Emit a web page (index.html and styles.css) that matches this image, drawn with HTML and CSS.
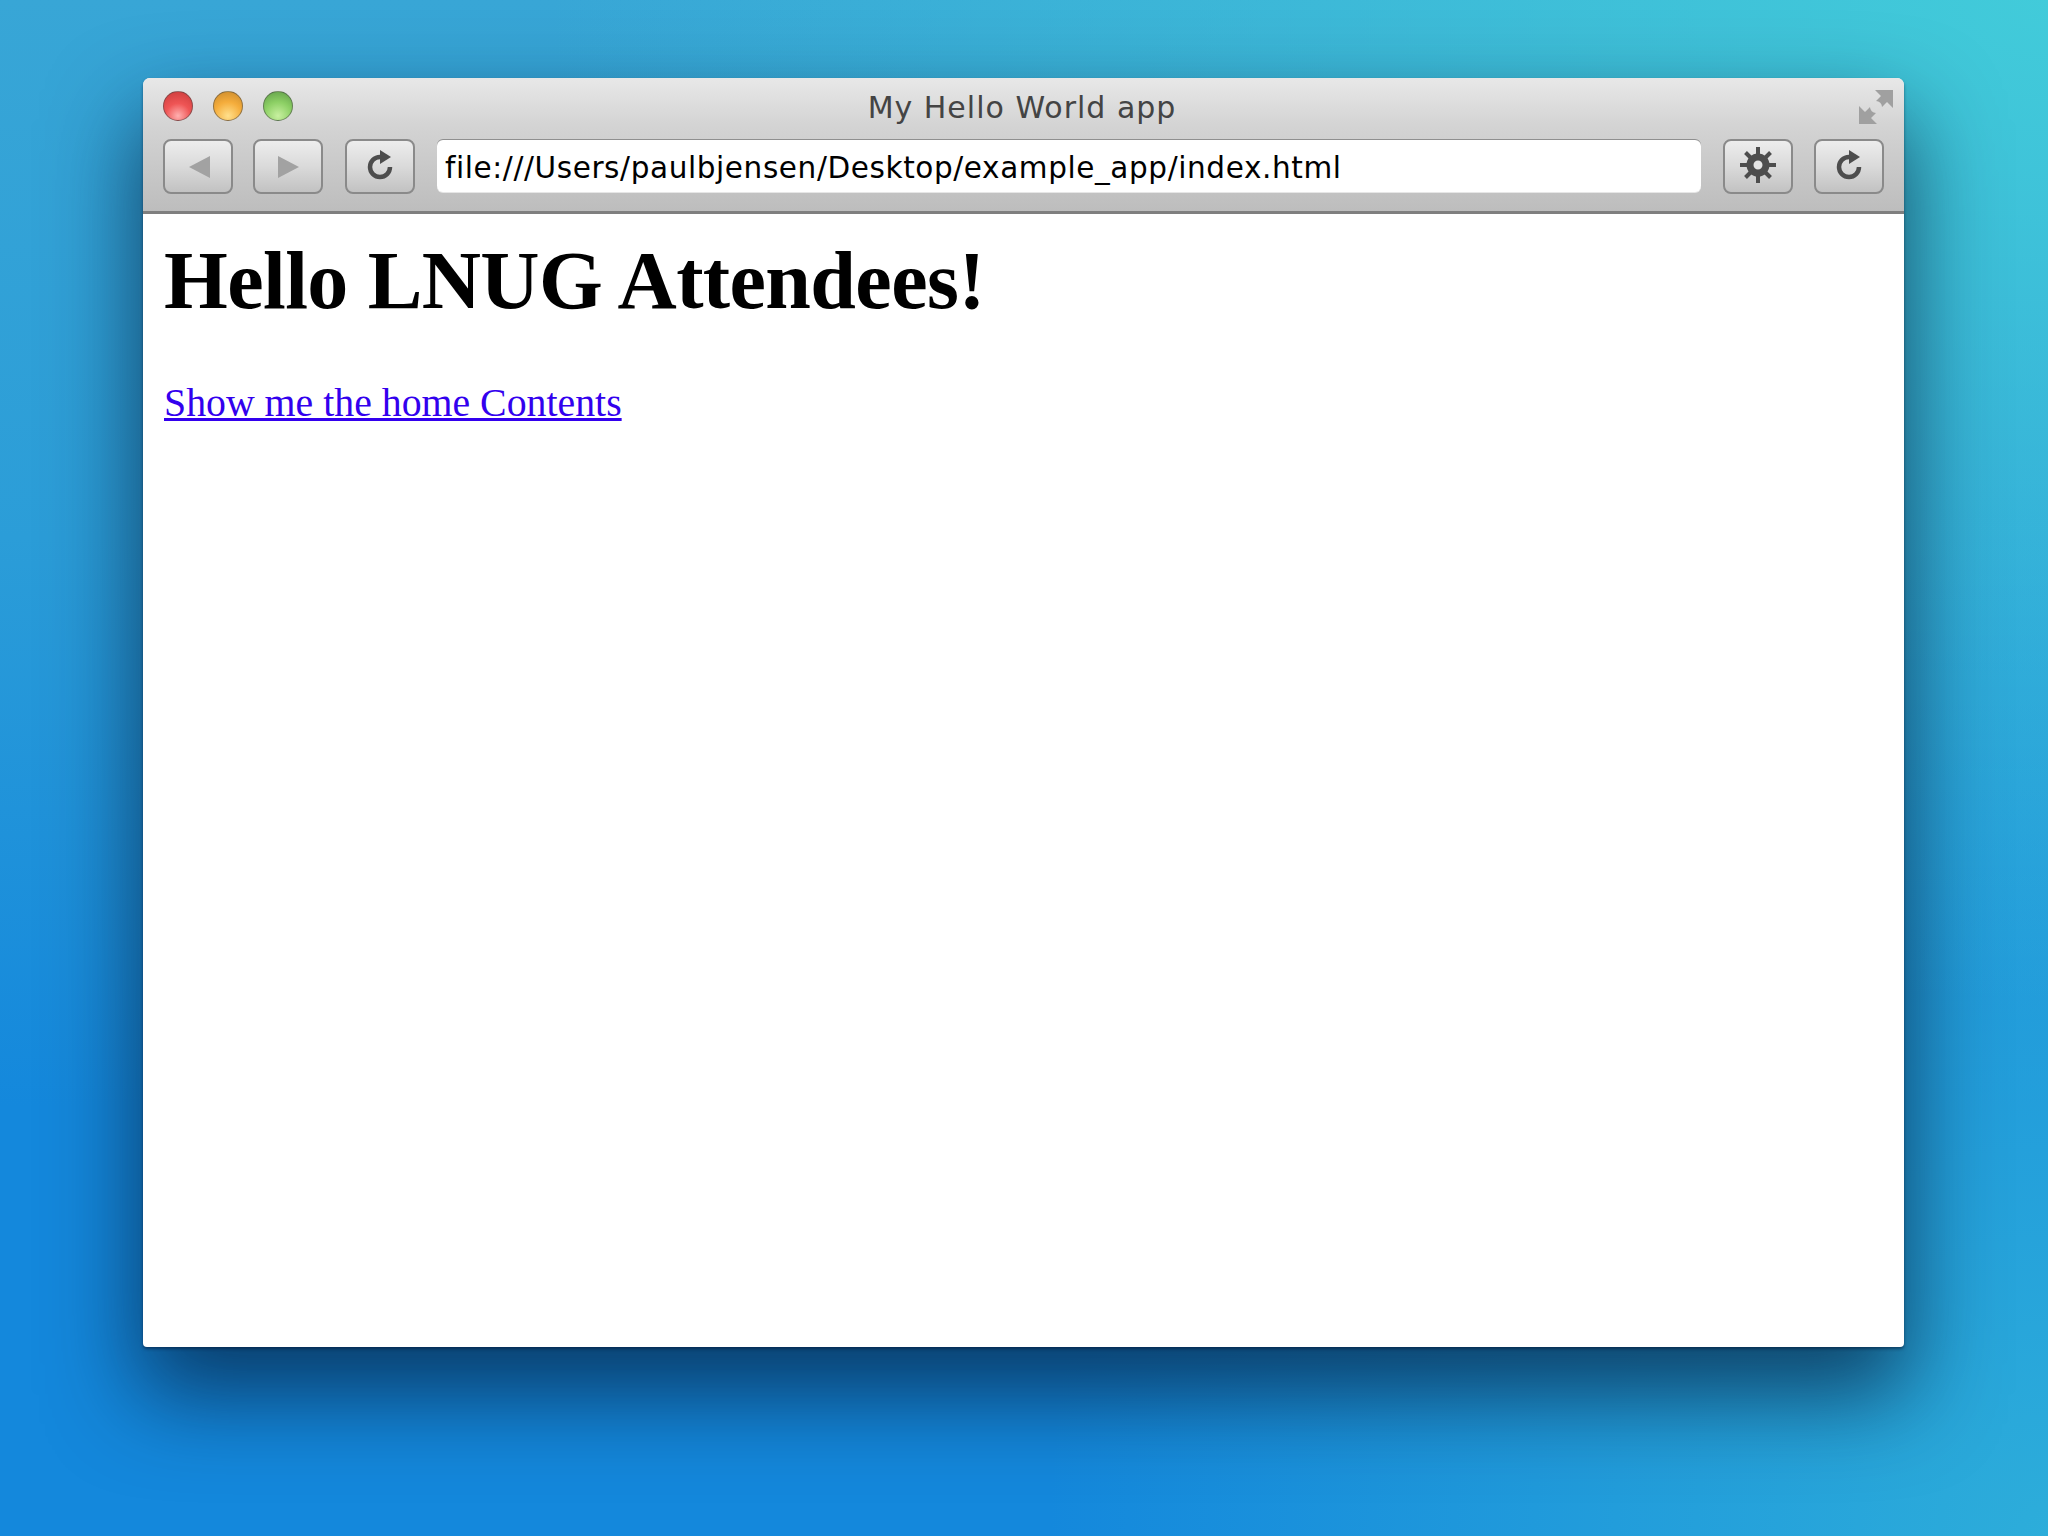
FILE: index.html
```html
<!DOCTYPE html>
<html lang="en">
<head>
<meta charset="utf-8">
<title>My Hello World app</title>
<link rel="stylesheet" href="styles.css">
</head>
<body>
<div class="window">
  <header class="chrome">
    <div class="titlebar">
      <div class="lights">
        <span class="light light-red"></span>
        <span class="light light-yellow"></span>
        <span class="light light-green"></span>
      </div>
      <div class="title">My Hello World app</div>
      <div class="fullscreen">
        <svg class="fs-icon" viewBox="0 0 36 36" width="36" height="36">
          <path class="fs-path" d="M17 1H35V19L29 13L24 18A6 6 0 0 0 18 12L23 7Z"/>
          <path class="fs-path" d="M1 17V35H19L13 29L18 24A6 6 0 0 1 12 18L7 23Z"/>
        </svg>
      </div>
    </div>
    <div class="toolbar">
      <div class="btn">
        <svg class="ic-back" viewBox="0 0 24 24" width="24" height="24"><path class="ic-faint" d="M1 12L22 1V23Z"/></svg>
      </div>
      <div class="btn">
        <svg viewBox="0 0 24 24" width="24" height="24"><path class="ic-faint" d="M23 12L2 1V23Z"/></svg>
      </div>
      <div class="btn btn-reload">
        <svg class="ic-raised" viewBox="0 0 30 30" width="30" height="30"><path class="ic-stroke" d="M25 17A10 10 0 1 1 15 7H17"/><path class="ic-fill" d="M15 0L26 7L15 14Z"/></svg>
      </div>
      <div class="url">file:///Users/paulbjensen/Desktop/example_app/index.html</div>
      <div class="btn btn-gear">
        <svg class="ic-raised" viewBox="0 0 40 40" width="40" height="40">
          <path class="ic-teeth" d="M20 2V38M2 20H38M7.5 7.5L32.5 32.5M32.5 7.5L7.5 32.5"/>
          <circle class="ic-ring" cx="20" cy="20" r="8"/>
        </svg>
      </div>
      <div class="btn">
        <svg class="ic-raised" viewBox="0 0 30 30" width="30" height="30"><path class="ic-stroke" d="M25 17A10 10 0 1 1 15 7H17"/><path class="ic-fill" d="M15 0L26 7L15 14Z"/></svg>
      </div>
    </div>
  </header>
  <main class="content">
    <h1 class="heading">Hello LNUG Attendees!</h1>
    <p class="para"><a class="link" href="#">Show me the home Contents</a></p>
  </main>
</div>
</body>
</html>
```
FILE: styles.css
```css
html, body { margin: 0; height: 100%; }
body {
  width: 2048px;
  height: 1536px;
  overflow: hidden;
  padding: 78px 0 0 143px;
  box-sizing: border-box;
  background:
    radial-gradient(ellipse 1500px 1000px at 100% 0%, rgba(66,205,218,.95), rgba(66,205,218,0) 100%),
    radial-gradient(ellipse 1000px 1100px at 100% 100%, rgba(46,175,218,.95), rgba(46,175,218,0) 100%),
    linear-gradient(180deg, #38a6d6 0%, #2b9dd8 35%, #1488dc 72%, #1488dc 100%);
}
.window {
  width: 1761px;
  height: 1269px;
  border-radius: 7px 7px 4px 4px;
  background: #fff;
  display: flex;
  flex-direction: column;
  overflow: hidden;
  box-shadow: 0 2px 3px rgba(0,20,50,.5), 0 44px 90px 4px rgba(5,30,60,.72);
}
.chrome {
  height: 136px;
  flex: none;
  box-sizing: border-box;
  border-bottom: 3px solid #7f7f7f;
  background: linear-gradient(180deg, #e8e8e8 0%, #d4d4d4 35%, #bdbdbd 100%);
  display: flex;
  flex-direction: column;
}
.titlebar {
  height: 61px;
  flex: none;
  padding: 0 8px 0 20px;
  display: grid;
  grid-template-columns: 1fr auto 1fr;
  align-items: center;
}
.lights { display: flex; gap: 20px; margin-top: -6px; }
.light {
  width: 30px;
  height: 30px;
  border-radius: 50%;
  box-sizing: border-box;
  border: 1px solid rgba(70,70,70,.55);
}
.light-red { background: radial-gradient(circle at 50% 85%, #ffb0b0 0%, #ef5555 45%, #c93a3a 100%); }
.light-yellow { background: radial-gradient(circle at 50% 85%, #ffe08c 0%, #f5ad3c 50%, #c8892c 100%); }
.light-green { background: radial-gradient(circle at 50% 85%, #c8f0a0 0%, #8dd065 50%, #5f9c48 100%); }
.title {
  font: 30px/1 "DejaVu Sans", sans-serif;
  letter-spacing: 1px;
  color: #444;
  margin: -2px 15px 0 0;
}
.fullscreen { justify-self: end; display: flex; margin-top: -4px; margin-right: 2px; }
.fs-path { fill: #a0a0a0; }
.toolbar {
  display: flex;
  align-items: flex-start;
  padding: 0 20px;
  gap: 20px;
}
.btn {
  width: 70px;
  height: 55px;
  flex: none;
  box-sizing: border-box;
  border: 2px solid #8a8a8a;
  border-radius: 8px;
  background: linear-gradient(180deg, #ededed 0%, #dadada 50%, #c2c2c2 100%);
  display: flex;
  align-items: center;
  justify-content: center;
}
.btn-reload { margin-left: 2px; }
.btn-gear { margin-right: 1px; }
.ic-back { margin-left: 3px; }
.ic-raised { margin-bottom: 4px; }
.ic-faint { fill: #a2a2a2; }
.ic-stroke { fill: none; stroke: #4d4d4d; stroke-width: 4.5; }
.ic-fill { fill: #4d4d4d; }
.ic-teeth { fill: none; stroke: #4d4d4d; stroke-width: 4; }
.ic-ring { fill: #e4e4e4; stroke: #4d4d4d; stroke-width: 7; }
.url {
  flex: 1;
  height: 52px;
  box-sizing: border-box;
  margin: 1px 2px 0 2px;
  padding-left: 8px;
  background: #fff;
  border-radius: 6px;
  box-shadow: 0 -1px 0 #8f8f8f, 0 1px 0 #e6e6e6;
  font: 29.5px/57px "DejaVu Sans", sans-serif;
  letter-spacing: 0.6px;
  color: #000;
  white-space: nowrap;
}
.content { flex: 1; padding: 19px 21px; }
.heading {
  margin: 0;
  font: bold 82px/96px "Liberation Serif", serif;
  letter-spacing: -0.6px;
  color: #000;
}
.para { margin: 52px 0 0; font: 39.8px/44px "Liberation Serif", serif; }
.link { color: #3300ee; text-decoration: underline; }
```
